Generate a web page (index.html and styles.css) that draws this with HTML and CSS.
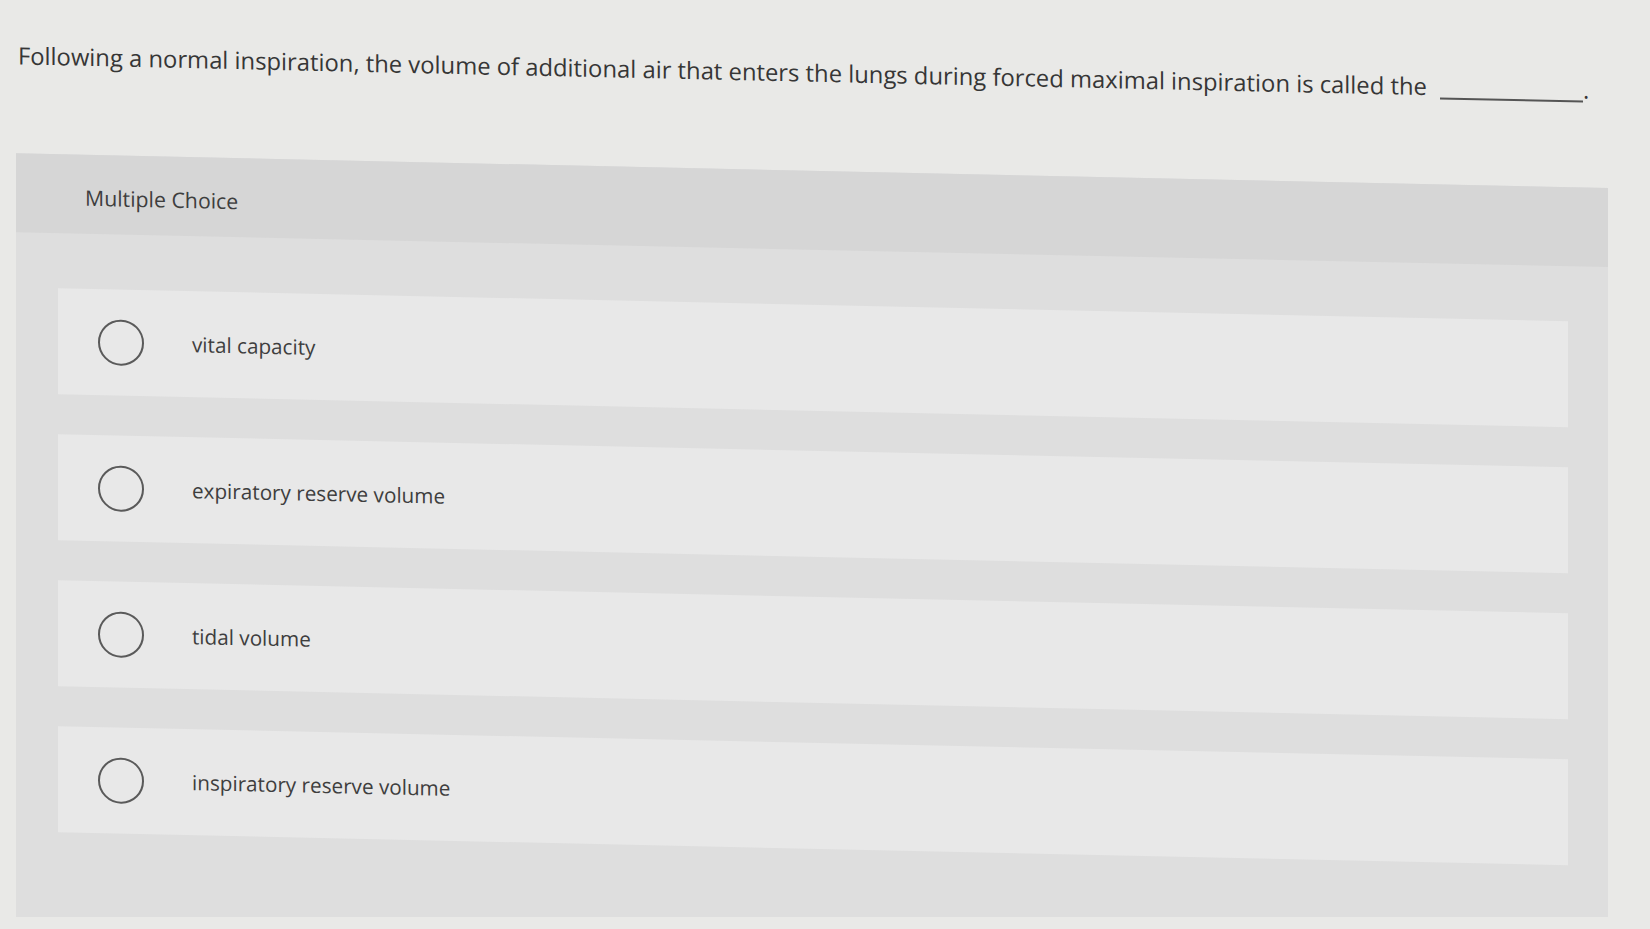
FILE: index.html
```html
<!DOCTYPE html>
<html lang="en">
<head>
<meta charset="utf-8">
<title>Multiple Choice</title>
<link rel="stylesheet" href="styles.css">
</head>
<body>
<div class="page">
  <p class="question">Following a normal inspiration, the volume of additional air that enters the lungs during forced maximal inspiration is called the <span class="blank"></span>.</p>
  <section class="panel">
    <div class="panel-header">Multiple Choice</div>
    <div class="options">
      <label class="option"><span class="radio"></span><span class="option-text">vital capacity</span></label>
      <label class="option"><span class="radio"></span><span class="option-text">expiratory reserve volume</span></label>
      <label class="option"><span class="radio"></span><span class="option-text">tidal volume</span></label>
      <label class="option"><span class="radio"></span><span class="option-text">inspiratory reserve volume</span></label>
    </div>
  </section>
</div>
</body>
</html>
```

FILE: styles.css
```css
html, body {
  margin: 0;
  padding: 0;
  background: #e9e9e7;
  overflow: hidden;
}
body {
  font-family: "Open Sans", Lato, "Liberation Sans", sans-serif;
  font-variant-ligatures: none;
  color: #363636;
}
.page {
  transform: skewY(1.25deg);
  transform-origin: 0 0;
}
.question {
  margin: 0;
  padding: 41px 0 0 18px;
  font-size: 23.8px;
  line-height: 28px;
  white-space: nowrap;
}
.blank {
  display: inline-block;
  width: 143px;
  border-bottom: 2px solid #555;
  margin-left: 7px;
  vertical-align: -4px;
}
.panel {
  margin: 84px 0 0 16px;
  width: 1592px;
  background: #dedede;
}
.panel-header {
  height: 79px;
  box-sizing: border-box;
  padding: 30px 0 0 69px;
  background: #d6d6d6;
  font-size: 21.3px;
  line-height: 25px;
  color: #3e3e3e;
}
.options {
  display: flex;
  flex-direction: column;
  gap: 40px;
  padding: 55px 40px 86px 42px;
}
.option {
  display: flex;
  align-items: center;
  height: 106px;
  padding-left: 40px;
  background: #e8e8e8;
  font-size: 20.7px;
  color: #3e3e3e;
}
.radio {
  width: 42px;
  height: 42px;
  border: 2px solid #5a5a5a;
  border-radius: 50%;
  flex: none;
}
.option-text {
  margin-left: 48px;
}
```
